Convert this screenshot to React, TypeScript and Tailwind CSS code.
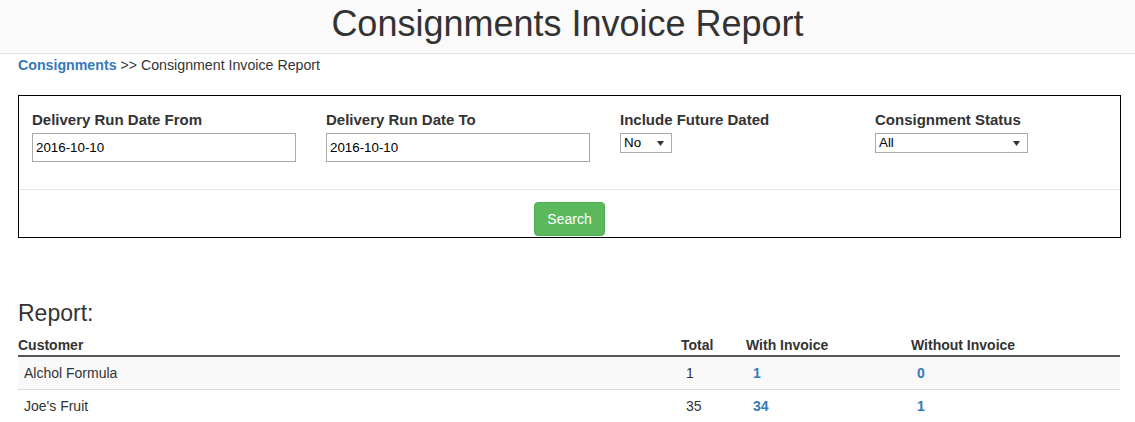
import React from 'react';

interface Row {
  customer: string;
  total: number;
  withInvoice: number;
  withoutInvoice: number;
}

const rows: Row[] = [
  { customer: 'Alchol Formula', total: 1, withInvoice: 1, withoutInvoice: 0 },
  { customer: "Joe's Fruit", total: 35, withInvoice: 34, withoutInvoice: 1 },
];

function Caret() {
  return (
    <svg width="7" height="5" viewBox="0 0 7 5" className="shrink-0">
      <path d="M0 0 L7 0 L3.5 5 Z" fill="#333" />
    </svg>
  );
}

function FakeSelect({ value, width }: { value: string; width: string }) {
  return (
    <div className={`${width} h-[20px] border border-[#a9a9a9] bg-white flex items-center justify-between pl-[3px] pr-[7px] text-[13.33px] text-black`}>
      <span>{value}</span>
      <Caret />
    </div>
  );
}

export default function App() {
  return (
    <div className="w-[1135px] h-[422px] overflow-hidden bg-white text-[#333] text-[14px] leading-[20px] font-['Liberation_Sans',Arial,sans-serif]">
      <div className="h-[54px] bg-[#fafafa] border-b border-[#e2e2e2] pt-[4px] text-center">
        <h1 className="text-[36px] leading-[40px] text-[#333]">Consignments Invoice Report</h1>
      </div>

      <div className="mt-[1px] px-[18px] text-[14.2px]">
        <a className="font-bold text-[#337ab7]">Consignments</a> &gt;&gt; Consignment Invoice Report
      </div>

      <div className="mt-[20px] ml-[18px] w-[1103px] border border-black">
        <div className="h-[93px] pt-[14px] pl-[13px] flex">
          <div className="w-[294px]">
            <label className="block font-bold text-[15px]">Delivery Run Date From</label>
            <div className="mt-[3px] w-[264px] h-[29px] border border-[#a9a9a9] pl-[3px] flex items-center text-[13.33px] text-black">2016-10-10</div>
          </div>
          <div className="w-[294px]">
            <label className="block font-bold text-[15px]">Delivery Run Date To</label>
            <div className="mt-[3px] w-[264px] h-[29px] border border-[#a9a9a9] pl-[3px] flex items-center text-[13.33px] text-black">2016-10-10</div>
          </div>
          <div className="w-[255px]">
            <label className="block font-bold text-[15px]">Include Future Dated</label>
            <div className="mt-[3px]">
              <FakeSelect value="No" width="w-[52px]" />
            </div>
          </div>
          <div>
            <label className="block font-bold text-[15px]">Consignment Status</label>
            <div className="mt-[3px]">
              <FakeSelect value="All" width="w-[153px]" />
            </div>
          </div>
        </div>
        <div className="border-t border-[#e5e5e5] pt-[12px] pb-[1px] flex justify-center">
          <button className="h-[34px] w-[71px] rounded-[4px] border border-[#4cae4c] bg-[#5cb85c] text-white text-[14px]">Search</button>
        </div>
      </div>

      <h3 className="mt-[62px] ml-[18px] text-[23px] leading-[26px] text-[#333]">Report:</h3>

      <div className="mt-[9px] ml-[18px] w-[1102px]">
        <div className="flex font-bold border-b-2 border-[#555] h-[22px]">
          <div className="w-[663px]">Customer</div>
          <div className="w-[65px]">Total</div>
          <div className="w-[165px]">With Invoice</div>
          <div>Without Invoice</div>
        </div>
        {rows.map((r, i) => (
          <div key={r.customer} className={`flex h-[33px] pt-[6px] border-b border-[#ddd] ${i % 2 === 0 ? 'bg-[#f9f9f9]' : 'bg-white'}`}>
            <div className="w-[663px] pl-[6px]">{r.customer}</div>
            <div className="w-[65px] pl-[5px]">{r.total}</div>
            <div className="w-[165px] pl-[7px] font-bold text-[#337ab7]">{r.withInvoice}</div>
            <div className="pl-[6px] font-bold text-[#337ab7]">{r.withoutInvoice}</div>
          </div>
        ))}
      </div>
    </div>
  );
}
